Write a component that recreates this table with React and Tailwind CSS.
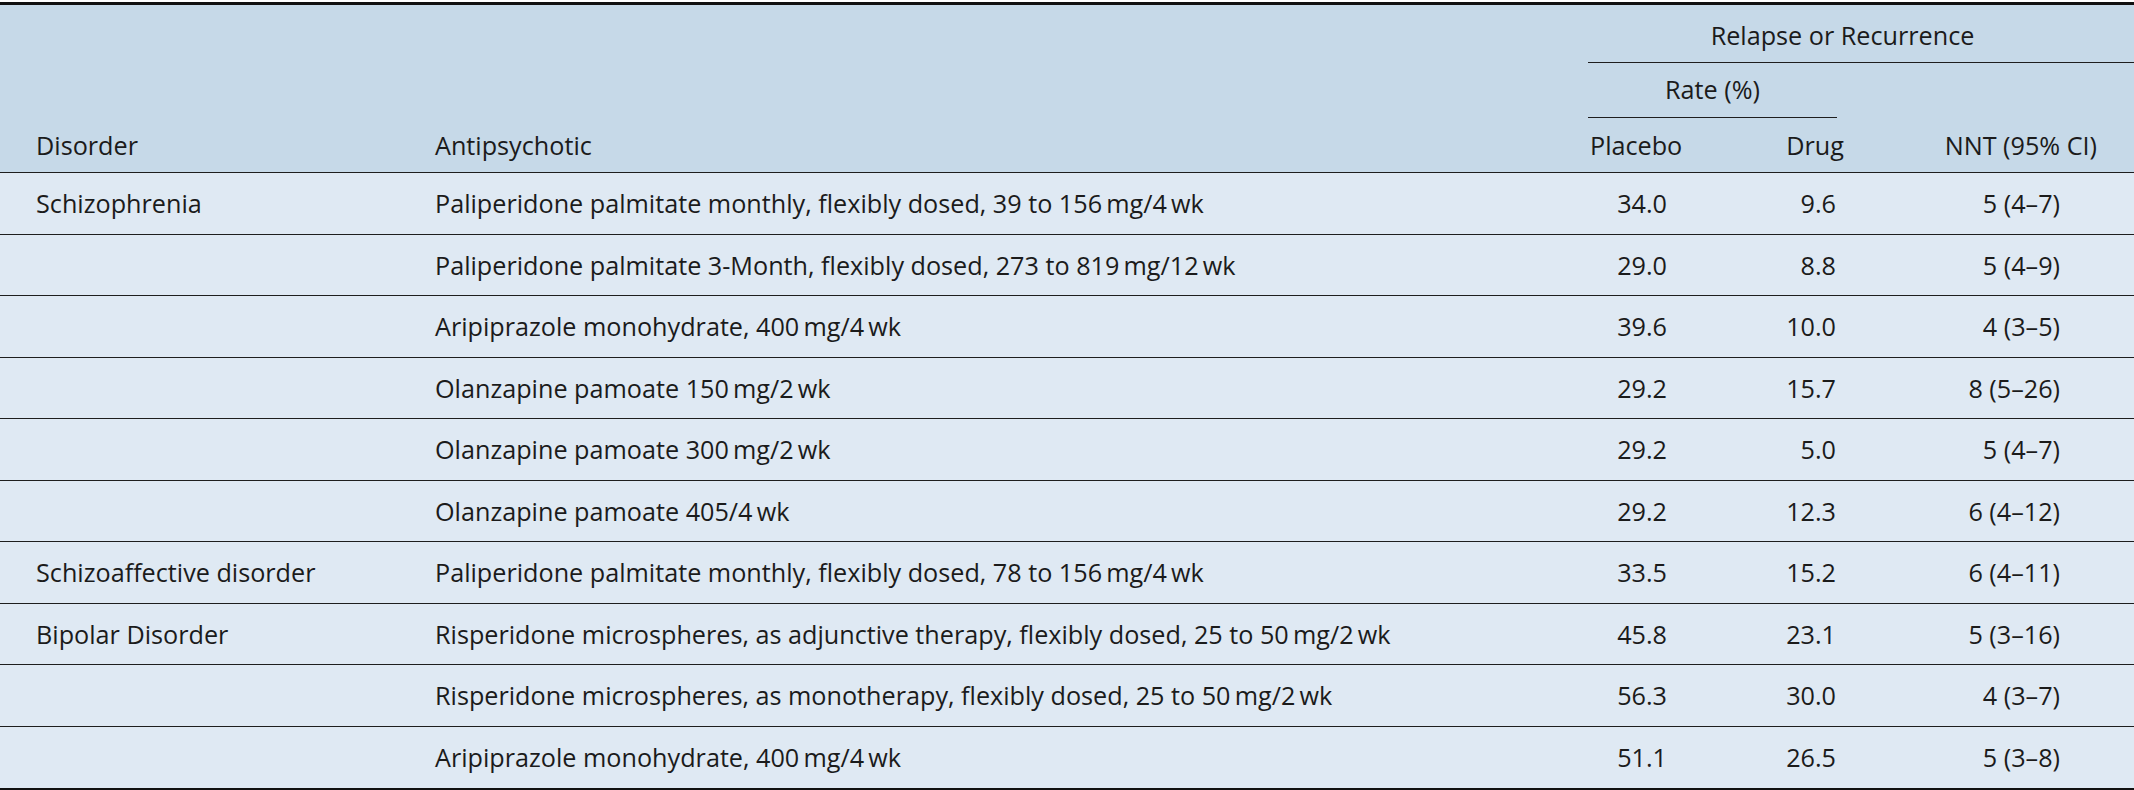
import React from "react";

const rows = [
  ["Schizophrenia", "Paliperidone palmitate monthly, flexibly dosed, 39 to 156\u2009mg/4\u2009wk", "34.0", "9.6", "5 (4–7)"],
  ["", "Paliperidone palmitate 3-Month, flexibly dosed, 273 to 819\u2009mg/12\u2009wk", "29.0", "8.8", "5 (4–9)"],
  ["", "Aripiprazole monohydrate, 400\u2009mg/4\u2009wk", "39.6", "10.0", "4 (3–5)"],
  ["", "Olanzapine pamoate 150\u2009mg/2\u2009wk", "29.2", "15.7", "8 (5–26)"],
  ["", "Olanzapine pamoate 300\u2009mg/2\u2009wk", "29.2", "5.0", "5 (4–7)"],
  ["", "Olanzapine pamoate 405/4\u2009wk", "29.2", "12.3", "6 (4–12)"],
  ["Schizoaffective disorder", "Paliperidone palmitate monthly, flexibly dosed, 78 to 156\u2009mg/4\u2009wk", "33.5", "15.2", "6 (4–11)"],
  ["Bipolar Disorder", "Risperidone microspheres, as adjunctive therapy, flexibly dosed, 25 to 50\u2009mg/2\u2009wk", "45.8", "23.1", "5 (3–16)"],
  ["", "Risperidone microspheres, as monotherapy, flexibly dosed, 25 to 50\u2009mg/2\u2009wk", "56.3", "30.0", "4 (3–7)"],
  ["", "Aripiprazole monohydrate, 400\u2009mg/4\u2009wk", "51.1", "26.5", "5 (3–8)"],
];

const cols = "grid grid-cols-[435px_1153px_172px_84px_290px]";

export default function App() {
  return (
    <div className="w-[2134px] bg-white pt-[2px] font-['Open_Sans',sans-serif] text-[25.2px] leading-[32px] text-[#1b1b1b]">
      <div className="border-t-[3px] border-b-[2px] border-[#111]">
        {/* header */}
        <div className={`${cols} grid-rows-[57px_1px_54px_1px_54px] bg-[#c6d9e8] border-b border-[#1e1e1e]`}>
          <div className="col-start-1 row-start-1 row-span-5 self-end pb-[11px] pl-[36px]">Disorder</div>
          <div className="col-start-2 row-start-1 row-span-5 self-end pb-[11px]">Antipsychotic</div>
          <div className="col-start-3 col-span-3 row-start-1 self-end pb-[11px] pr-[37px] text-center">Relapse or Recurrence</div>
          <div className="col-start-3 col-span-3 row-start-2 bg-[#1e1e1e]"></div>
          <div className="col-start-3 col-span-2 row-start-3 self-end pb-[12px] pr-[7px] text-center">Rate (%)</div>
          <div className="col-start-3 col-span-2 row-start-4 mr-[7px] bg-[#1e1e1e]"></div>
          <div className="col-start-3 row-start-5 self-end pb-[11px] pl-[2px]">Placebo</div>
          <div className="col-start-4 row-start-5 self-end pb-[11px] text-right">Drug</div>
          <div className="col-start-5 row-start-5 self-end pb-[11px] pr-[37px] text-right">NNT (95% CI)</div>
        </div>

        {/* body */}
        {rows.map((r, i) => (
          <div
            key={i}
            className={`${cols} h-[61.5px] items-center bg-[#dfe9f3] ${i < rows.length - 1 ? "border-b border-[#1e1e1e]" : ""}`}
          >
            <div className="pl-[36px]">{r[0]}</div>
            <div>{r[1]}</div>
            <div className="pr-[93px] text-right">{r[2]}</div>
            <div className="pr-[8px] text-right">{r[3]}</div>
            <div className="pr-[74px] text-right">{r[4]}</div>
          </div>
        ))}
      </div>
    </div>
  );
}
